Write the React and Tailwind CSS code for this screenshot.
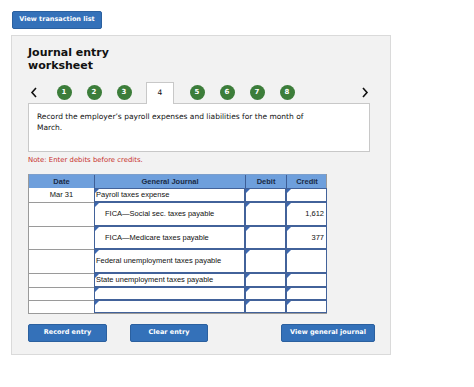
import React from 'react';

const rows = [
  { h: 'h-[14px]', date: 'Mar 31', acct: 'Payroll taxes expense', indent: false, credit: '' },
  { h: 'h-[24px]', date: '', acct: 'FICA—Social sec. taxes payable', indent: true, credit: '1,612' },
  { h: 'h-[23px]', date: '', acct: 'FICA—Medicare taxes payable', indent: true, credit: '377' },
  { h: 'h-[24px]', date: '', acct: 'Federal unemployment taxes payable', indent: false, credit: '' },
  { h: 'h-[14px]', date: '', acct: 'State unemployment taxes payable', indent: false, credit: '' },
  { h: 'h-[13px]', date: '', acct: '', indent: false, credit: '' },
  { h: 'h-[13px]', date: '', acct: '', indent: false, credit: '' },
];

function Marker() {
  return (
    <span className="absolute left-0 top-0 w-0 h-0 border-t-[4px] border-t-[#3c68b0] border-r-[4px] border-r-transparent" />
  );
}

function InputCell({ children, className = '' }) {
  return (
    <div className={`relative bg-white border border-[#42629a] flex items-center ${className}`}>
      <Marker />
      {children}
    </div>
  );
}

function Chevron({ dir }) {
  return (
    <svg width="8" height="11" viewBox="0 0 8 11" fill="none">
      <path
        d={dir === 'left' ? 'M6 1 L2 5.5 L6 10' : 'M2 1 L6 5.5 L2 10'}
        stroke="#111"
        strokeWidth="1.6"
      />
    </svg>
  );
}

function Step({ n }) {
  return (
    <div className="w-[30px] h-[22px] flex items-center justify-center">
      <div className="w-[15px] h-[15px] rounded-full bg-[#3c7d3a] text-white text-[7px] font-bold flex items-center justify-center">
        {n}
      </div>
    </div>
  );
}

const btn = "h-[18px] bg-[#3471b9] border border-[#2b609f] rounded-[2px] text-white font-bold text-[6.5px] flex items-center justify-center";

export default function App() {
  return (
    <div className="w-[474px] h-[387px] bg-white font-['DejaVu_Sans',sans-serif] text-[#111]">
      <div className="pt-[11px] pl-[12px]">
        <div className={`${btn} w-[90px]`}>View transaction list</div>
      </div>
      <div className="ml-[11px] mt-[6px] w-[380px] h-[320px] bg-[#f2f2f2] border border-[#dadada] pl-[16px] pr-[20px] pt-[10px]">
        <div className="text-[11px] leading-[13px] font-bold">
          Journal entry
          <br />
          worksheet
        </div>

        <div className="mt-[9px] flex items-end h-[22px]">
          <div className="w-[21px] h-[22px] flex items-center pl-[2px]">
            <Chevron dir="left" />
          </div>
          <Step n="1" />
          <Step n="2" />
          <Step n="3" />
          <div className="ml-[7px] mr-[8px] w-[28px] h-[22px] bg-white border border-b-0 border-[#c8c8c8] relative z-10 -mb-px pb-px flex items-center justify-center text-[7.5px]">
            4
          </div>
          <Step n="5" />
          <Step n="6" />
          <Step n="7" />
          <Step n="8" />
          <div className="ml-auto h-[22px] flex items-center pr-[1px]">
            <Chevron dir="right" />
          </div>
        </div>

        <div className="h-[49px] bg-white border border-[#c8c8c8] px-[8px] pt-[7px] text-[7.5px] leading-[11px]">
          Record the employer’s payroll expenses and liabilities for the month of
          <br />
          March.
        </div>

        <div className="mt-[3px] text-[6.9px] leading-[10px] text-[#c8312c]">
          Note: Enter debits before credits.
        </div>

        <div className="mt-[9px] w-[299px] font-['Liberation_Sans',Arial,sans-serif] text-[7.5px] border border-[#9a9a9a] border-t-0">
          <div className="grid grid-cols-[65px_151px_41px_41px] h-[14px] bg-[#6e9fdc] font-bold text-[#1a2a45] border-t border-[#7c9fcc]">
            <div className="flex items-center justify-center">Date</div>
            <div className="flex items-center justify-center border-l border-[#3d5e96]">General Journal</div>
            <div className="flex items-center justify-center border-l border-[#3d5e96]">Debit</div>
            <div className="flex items-center justify-center border-l border-[#3d5e96]">Credit</div>
          </div>
          {rows.map((r, i) => (
            <div key={i} className={`grid grid-cols-[65px_151px_41px_41px] ${r.h}`}>
              <div className={`bg-white flex items-center justify-center ${i > 0 ? 'border-t border-[#9a9a9a]' : ''}`}>
                {r.date}
              </div>
              <InputCell className={r.indent ? 'pl-[10px]' : 'pl-[1px]'}>{r.acct}</InputCell>
              <InputCell />
              <InputCell className="justify-end pr-[2px]">{r.credit}</InputCell>
            </div>
          ))}
        </div>

        <div className="mt-[10px] flex">
          <div className={`${btn} w-[79px]`}>Record entry</div>
          <div className={`${btn} w-[78px] ml-[23px]`}>Clear entry</div>
          <div className={`${btn} w-[94px] ml-auto -mr-[5px]`}>View general journal</div>
        </div>
      </div>
    </div>
  );
}
